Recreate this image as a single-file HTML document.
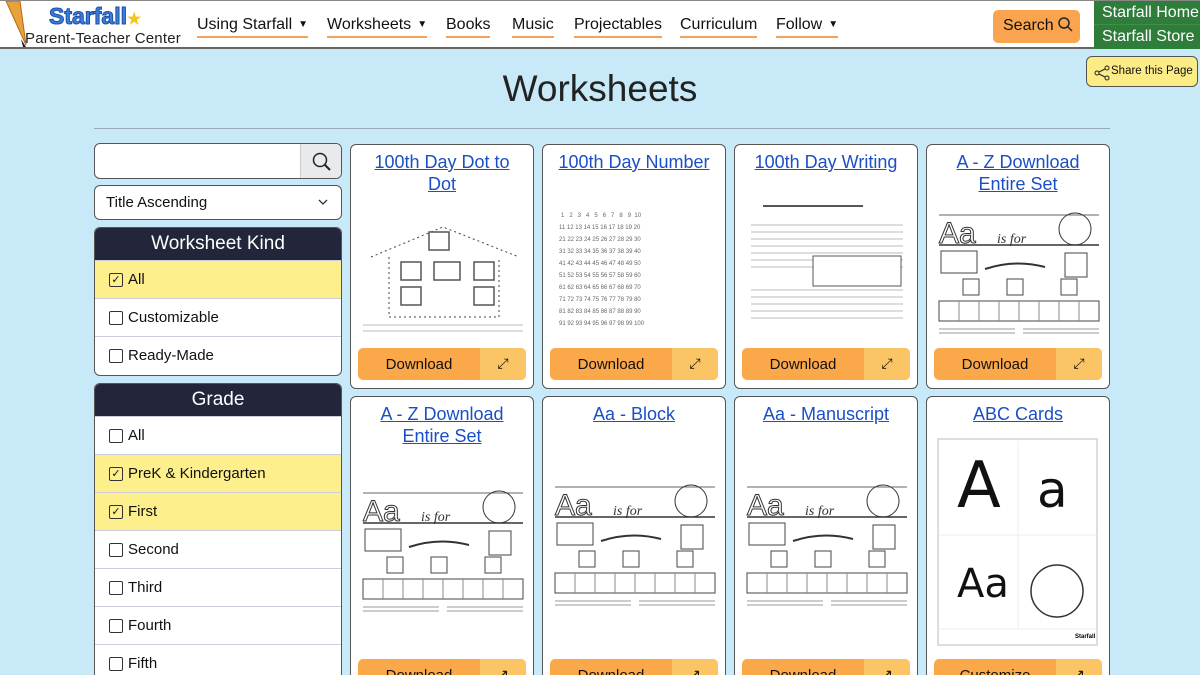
<!DOCTYPE html>
<html style="width:1200px;height:675px;overflow:hidden"><head><meta charset="utf-8"><style>
*{box-sizing:border-box;margin:0;padding:0}
body{width:1200px;height:675px;overflow:hidden;background:#c8e9f8;font-family:"Liberation Sans",sans-serif;color:#111;position:relative}
.hdr{position:absolute;left:0;top:0;width:1200px;height:49px;background:#fff;border-bottom:2px solid #666;border-top:1px solid #888}
.logo1{position:absolute;left:49px;top:2px;font:bold 23px "Liberation Sans",sans-serif;color:#3d7fd8;-webkit-text-stroke:1px #1b4fa8}
.logo2{position:absolute;left:25px;top:29px;font-size:15px;color:#222;letter-spacing:.2px}
.nav a{position:absolute;top:15px;font-size:16px;color:#111;text-decoration:none;border-bottom:2px solid #f4a35a;padding-bottom:2px;white-space:nowrap}
.nav b{font-size:10px;font-weight:normal;vertical-align:2px;margin-left:6px}
.srch{position:absolute;left:993px;top:9px;width:87px;height:33px;background:#fba450;border-radius:5px;font-size:16px;padding:7px 0 0 10px}
.green{position:absolute;left:1094px;top:0;width:106px;height:48px;background:#2e7d3a;color:#fff;font-size:16px}
.green div{height:24px;padding:3px 0 0 8px}
.green div:first-child{border-bottom:1px solid #3f8f4b}
.share{position:absolute;left:1086px;top:56px;width:112px;height:31px;background:#fbec85;border:1px solid #555;border-radius:6px;font-size:11.5px;padding:8px 0 0 24px;white-space:nowrap}
h1{position:absolute;left:0;width:1200px;text-align:center;top:68px;font-weight:normal;font-size:37px;color:#222}
.rule{position:absolute;left:94px;top:128px;width:1016px;height:1px;background:#9ab}
.box{position:absolute;left:94px;width:248px;background:#fff;border:1px solid #555;border-radius:6px;overflow:hidden}
.panel .h{background:#23253b;color:#fff;text-align:center;font-size:19px;height:32px;padding-top:5px}
.panel .r{height:38px;border-top:1px solid #ccd;font-size:15px;padding-left:14px;display:flex;align-items:center}
.panel .r.y{background:#fcef8c}
.cb{display:inline-block;width:14px;height:14px;border:1px solid #333;border-radius:2px;margin-right:5px;font-size:11px;line-height:12px;text-align:center}
.card{position:absolute;width:184px;background:#fff;border:1px solid #555;border-radius:6px;overflow:hidden}
.card .t{text-align:center;color:#1a4fc8;text-decoration:underline;font-size:18px;line-height:22px;margin-top:6px;padding:0 8px}
.card svg{position:absolute;left:8px}
.dl{position:absolute;left:7px;width:168px;height:32px;background:#fba84a;border-radius:5px;font-size:15px;overflow:hidden}
.dl span{position:absolute;left:0;width:122px;text-align:center;top:8px}
.dl i{position:absolute;right:0;top:0;width:46px;height:32px;background:#fbc566;font-style:normal;text-align:center;font-size:14px;padding-top:7px}
</style></head><body>
<div class="hdr">
<svg style="position:absolute;left:4px;top:0" width="24" height="48"><path d="M2 0 L16 0 L22 44 Z" fill="#e9a13b" stroke="#b56c10" stroke-width="1"/><path d="M17 38 L22 46 L19 46Z" fill="#222"/></svg>
<div class="logo1">Starfall<span style="color:#f5c518;-webkit-text-stroke:0;font-size:16px">★</span></div>
<div class="logo2">Parent-Teacher Center</div>
<div class="nav">
<a style="left:197px">Using Starfall<b>▼</b></a>
<a style="left:327px">Worksheets<b>▼</b></a>
<a style="left:446px">Books</a>
<a style="left:512px">Music</a>
<a style="left:574px">Projectables</a>
<a style="left:680px">Curriculum</a>
<a style="left:776px">Follow<b>▼</b></a>
</div>
<div class="srch">Search <svg width="15" height="15" style="vertical-align:-2px"><circle cx="6" cy="6" r="5" fill="none" stroke="#222" stroke-width="1.5"/><path d="M10 10 L14 14" stroke="#222" stroke-width="1.5"/></svg></div>
<div class="green"><div>Starfall Home</div><div>Starfall Store</div></div>
</div>
<div class="share"><svg style="position:absolute;left:7px;top:8px" width="16" height="16"><circle cx="3" cy="8" r="2" fill="none" stroke="#222"/><circle cx="13" cy="3" r="2" fill="none" stroke="#222"/><circle cx="13" cy="13" r="2" fill="none" stroke="#222"/><path d="M5 7 L11 4 M5 9 L11 12" stroke="#222"/></svg>Share this Page</div>
<h1>Worksheets</h1>
<div class="rule"></div>

<div class="box" style="top:143px;height:36px"><div style="position:absolute;right:0;top:0;width:41px;height:36px;background:#e8eaed;border-left:1px solid #ccc"><svg style="margin:8px 0 0 11px" width="20" height="20"><circle cx="8" cy="8" r="6.5" fill="none" stroke="#222" stroke-width="1.5"/><path d="M13 13 L18 18" stroke="#222" stroke-width="2"/></svg></div></div>
<div class="box" style="top:185px;height:35px;font-size:15px;padding:8px 0 0 11px">Title Ascending<svg style="position:absolute;right:13px;top:13px" width="10" height="7"><path d="M1 1 L5 5 L9 1" stroke="#333" fill="none" stroke-width="1.3"/></svg></div>

<div class="box panel" style="top:227px;height:149px">
<div class="h">Worksheet Kind</div>
<div class="r y"><span class="cb">✓</span>All</div>
<div class="r"><span class="cb"></span>Customizable</div>
<div class="r"><span class="cb"></span>Ready-Made</div>
</div>
<div class="box panel" style="top:383px;height:310px">
<div class="h">Grade</div>
<div class="r"><span class="cb"></span>All</div>
<div class="r y"><span class="cb">✓</span>PreK &amp; Kindergarten</div>
<div class="r y"><span class="cb">✓</span>First</div>
<div class="r"><span class="cb"></span>Second</div>
<div class="r"><span class="cb"></span>Third</div>
<div class="r"><span class="cb"></span>Fourth</div>
<div class="r"><span class="cb"></span>Fifth</div>
</div>

<div class="card" style="left:350px;top:144px;height:245px"><div class="t">100th Day Dot to Dot</div>
<svg style="top:62px" width="168" height="135"><g stroke="#444" fill="none" stroke-dasharray="2 3"><path d="M12 50 L84 20 L160 50"/><path d="M30 50 L30 110 L140 110 L140 50"/></g><g stroke="#555" fill="none" stroke-width="1.5"><rect x="42" y="55" width="20" height="18"/><rect x="75" y="55" width="26" height="18"/><rect x="115" y="55" width="20" height="18"/><rect x="42" y="80" width="20" height="18"/><rect x="115" y="80" width="20" height="18"/><rect x="70" y="25" width="20" height="18"/></g><path d="M4 118 H164 M4 124 H164" stroke="#bbb"/></svg>
<div class="dl" style="top:203px"><span>Download</span><i>⤢</i></div></div>
<div class="card" style="left:542px;top:144px;height:245px"><div class="t">100th Day Number</div>
<svg style="top:50px" width="168" height="135"><g fill="#666" font-size="6" font-family="Liberation Sans"><text x="10" y="22">1 &#160;&#160;2 &#160;&#160;3 &#160;&#160;4 &#160;&#160;5 &#160;&#160;6 &#160;&#160;7 &#160;&#160;8 &#160;&#160;9 &#160;10</text><text x="8" y="34">11 12 13 14 15 16 17 18 19 20</text><text x="8" y="46">21 22 23 24 25 26 27 28 29 30</text><text x="8" y="58">31 32 33 34 35 36 37 38 39 40</text><text x="8" y="70">41 42 43 44 45 46 47 48 49 50</text><text x="8" y="82">51 52 53 54 55 56 57 58 59 60</text><text x="8" y="94">61 62 63 64 65 66 67 68 69 70</text><text x="8" y="106">71 72 73 74 75 76 77 78 79 80</text><text x="8" y="118">81 82 83 84 85 86 87 88 89 90</text><text x="8" y="130">91 92 93 94 95 96 97 98 99 100</text></g></svg>
<div class="dl" style="top:203px"><span>Download</span><i>⤢</i></div></div>
<div class="card" style="left:734px;top:144px;height:245px"><div class="t">100th Day Writing</div>
<svg style="top:55px" width="168" height="135"><g stroke="#bbb"><path d="M8 25H160M8 32H160M8 39H160M8 46H160M8 53H160M8 60H160M8 67H160M8 90H160M8 97H160M8 104H160M8 111H160M8 118H160"/></g><rect x="70" y="56" width="88" height="30" fill="#fff" stroke="#555"/><path d="M20 6H120" stroke="#555" stroke-width="2"/></svg>
<div class="dl" style="top:203px"><span>Download</span><i>⤢</i></div></div>

<svg width="0" height="0" style="position:absolute"><defs><g id="az"><path d="M4 8H164" stroke="#666"/><text x="4" y="36" font-size="30" font-family="Liberation Sans" fill="#fff" stroke="#333">Aa</text><text x="62" y="36" font-size="14" font-style="italic" fill="#333" font-family="Liberation Serif">is for</text><circle cx="140" cy="22" r="16" fill="none" stroke="#333"/><path d="M4 38H164" stroke="#333" stroke-width="1.5"/><rect x="6" y="44" width="36" height="22" fill="none" stroke="#444"/><path d="M50 62 Q80 52 110 60" stroke="#333" fill="none" stroke-width="2"/><rect x="130" y="46" width="22" height="24" fill="none" stroke="#444"/><rect x="28" y="72" width="16" height="16" fill="none" stroke="#444"/><rect x="72" y="72" width="16" height="16" fill="none" stroke="#444"/><rect x="126" y="72" width="16" height="16" fill="none" stroke="#444"/><rect x="4" y="94" width="160" height="20" fill="none" stroke="#444"/><path d="M24 94V114M44 94V114M64 94V114M84 94V114M104 94V114M124 94V114M144 94V114" stroke="#888"/><path d="M4 122H80M88 122H164M4 126H80M88 126H164" stroke="#999"/></g></defs></svg>

<div class="card" style="left:926px;top:144px;height:245px"><div class="t">A - Z Download Entire Set</div>
<svg style="top:62px" width="168" height="135"><use href="#az"/></svg>
<div class="dl" style="top:203px"><span>Download</span><i>⤢</i></div></div>

<div class="card" style="left:350px;top:396px;height:290px"><div class="t">A - Z Download Entire Set</div>
<svg style="top:88px" width="168" height="135"><use href="#az"/></svg>
<div class="dl" style="top:262px"><span>Download</span><i>↗</i></div></div>
<div class="card" style="left:542px;top:396px;height:290px"><div class="t">Aa - Block</div>
<svg style="top:82px" width="168" height="135"><use href="#az"/></svg>
<div class="dl" style="top:262px"><span>Download</span><i>↗</i></div></div>
<div class="card" style="left:734px;top:396px;height:290px"><div class="t">Aa - Manuscript</div>
<svg style="top:82px" width="168" height="135"><use href="#az"/></svg>
<div class="dl" style="top:262px"><span>Download</span><i>↗</i></div></div>
<div class="card" style="left:926px;top:396px;height:290px"><div class="t">ABC Cards</div>
<svg style="top:40px" width="168" height="210"><rect x="3" y="2" width="159" height="206" fill="#fff" stroke="#ddd" stroke-width="2"/><path d="M83 4V192M4 98H162M4 192H162" stroke="#eee"/><text x="22" y="70" font-size="64" font-family="DejaVu Sans" fill="#111">A</text><text x="102" y="70" font-size="50" font-family="DejaVu Sans" fill="#111">a</text><text x="22" y="160" font-size="40" font-family="DejaVu Sans" fill="#111">Aa</text><circle cx="122" cy="154" r="26" fill="none" stroke="#333" stroke-width="1.5"/><text x="140" y="201" font-size="6" font-weight="bold">Starfall</text></svg>
<div class="dl" style="top:262px"><span>Customize</span><i>↗</i></div></div>
</body></html>
